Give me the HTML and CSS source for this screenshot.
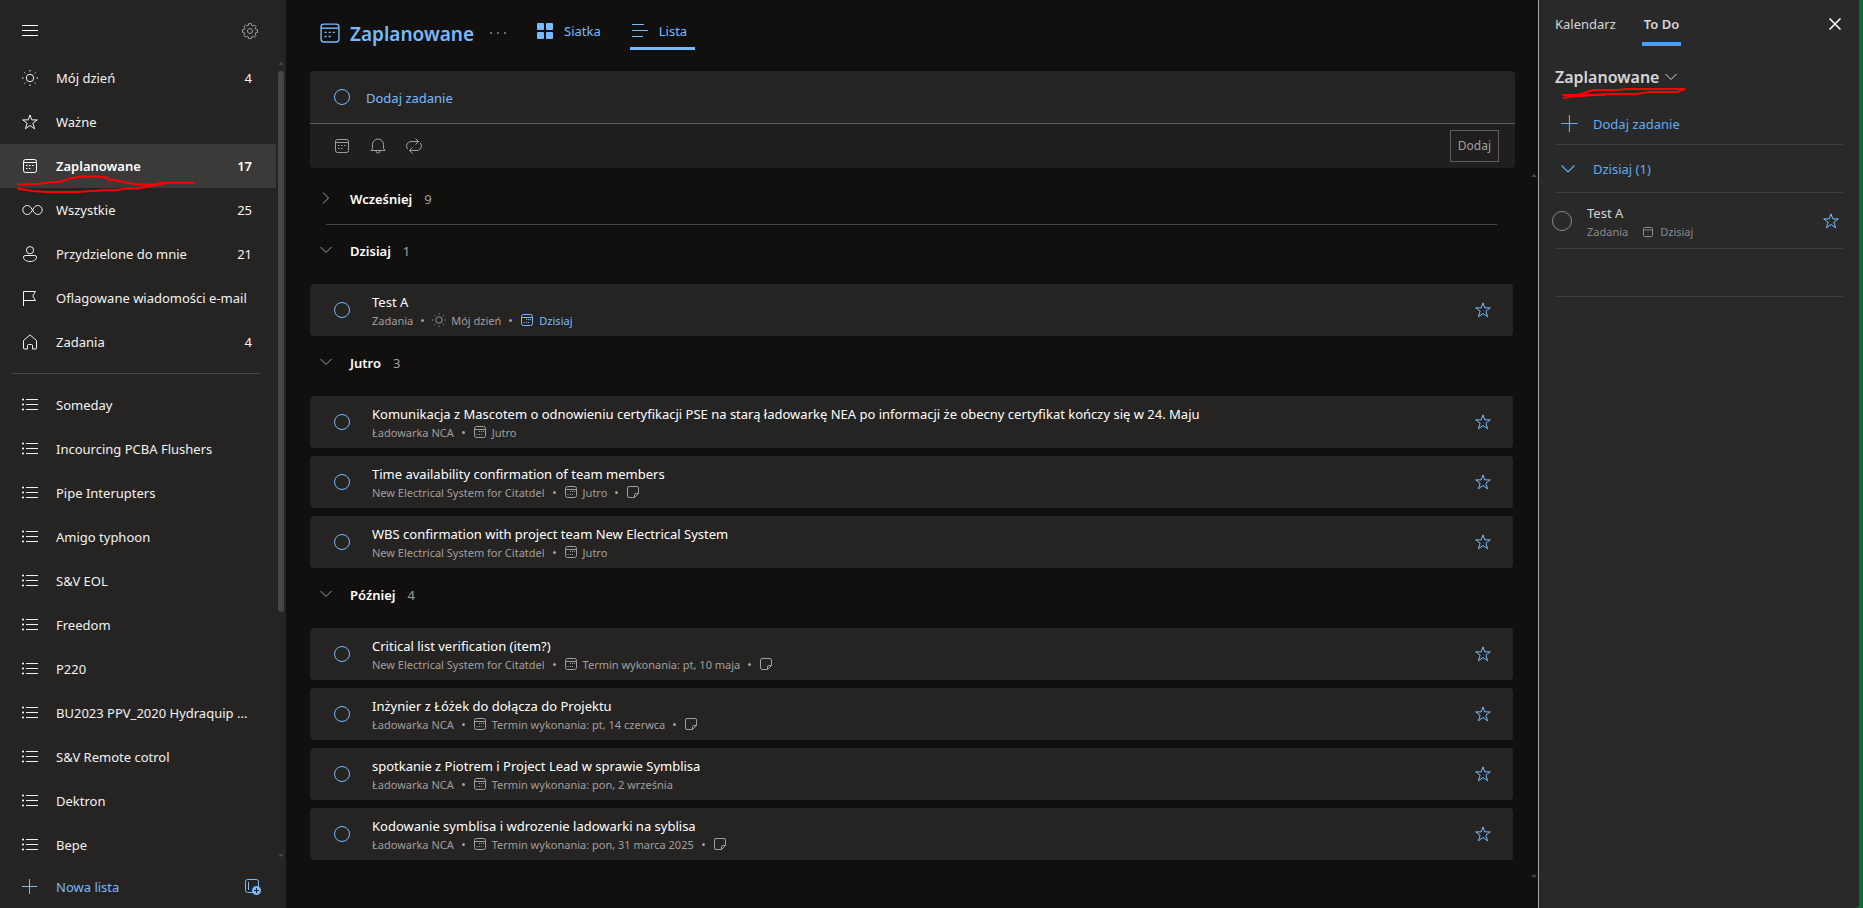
FILE: index.html
```html
<!DOCTYPE html>
<html lang="pl">
<head>
    <meta charset="UTF-8">
    <meta name="viewport" content="width=device-width, initial-scale=1.0">
    <title>Zaplanowane - To Do</title>
    <link rel="stylesheet" href="styles.css">
</head>
<body>

<svg class="sprite" aria-hidden="true">
    <symbol id="i-sun" viewBox="0 0 16 16"><circle cx="8" cy="8" r="3.7"/><path d="M8 0v1.5M8 14.5V16M0 8h1.5M14.5 8H16M2.4 2.4l1 1M12.6 12.6l1 1M13.6 2.4l-1 1M3.4 12.6l-1 1"/></symbol>
    <symbol id="i-star" viewBox="0 0 16 16"><path d="M8 .9l1.8 5h5.5l-4.4 3.3 1.7 5.6L8 11.500l-4.600 3.300 1.700-5.600L.7 5.900h5.500z"/></symbol>
    <symbol id="i-cal" viewBox="0 0 16 16"><rect x="1.5" y="1.500" width="13" height="13" rx="2"/><path d="M1.500 4.500h13"/><path d="M7 7.500h1.500M10 7.500h1.500M4 10.500h1.500M7 10.500h1.500M4 7.500h1.500"/></symbol>
    <symbol id="i-calmini" viewBox="0 0 12 12"><rect x="1.500" y="1.500" width="9" height="9" rx="1"/><path d="M1.500 4h9"/></symbol>
    <symbol id="i-calmeta" viewBox="0 0 12 12"><rect x=".5" y=".5" width="11" height="11" rx="2"/><path d="M.5 3.500h11M5 5.500h1M7 5.500h1M9 5.500h1M2.500 8.500h1M5 8.500h1M7 8.500h1"/></symbol>
    <symbol id="i-inf" viewBox="0 0 21 16"><path d="M10.500 8C8.500 4.800 7.500 3.500 5.300 3.500a4.500 4.500 0 0 0 0 9C7.500 12.500 8.500 11.200 10.500 8s3-4.500 5.200-4.500a4.500 4.500 0 0 1 0 9C13.500 12.500 12.500 11.200 10.500 8z"/></symbol>
    <symbol id="i-user" viewBox="0 0 16 16"><circle cx="8" cy="4.200" r="3.600"/><path d="M3.200 9.500h9.600a1.700 1.700 0 0 1 1.700 1.700c0 2.600-3 4.300-6.500 4.300s-6.500-1.700-6.500-4.300a1.700 1.700 0 0 1 1.700-1.700z"/></symbol>
    <symbol id="i-flag" viewBox="0 0 16 16"><path d="M1.500 16V1.500h12L10.800 6l2.700 4.500h-12"/></symbol>
    <symbol id="i-home" viewBox="0 0 16 16"><path d="M1.500 6.500L8 .9l6.500 5.600v7.500a1 1 0 0 1-1 1H10.500v-3.500a1 1 0 0 0-1-1h-3a1 1 0 0 0-1 1V15H2.500a1 1 0 0 1-1-1z"/></symbol>
    <symbol id="i-list" viewBox="0 0 16 16"><path d="M4 2.500h12M4 7.500h12M4 12.500h12M0 2.500h2M0 7.500h2M0 12.500h2"/><path opacity=".35" d="M0 1.500h2M0 3.500h2M0 6.500h2M0 8.500h2M0 11.500h2M0 13.500h2"/></symbol>
    <symbol id="i-gear" viewBox="0 0 16 16"><circle cx="8" cy="8" r="2.500"/><path d="M6.700.6h2.600l.4 1.900 1.100.5 1.700-1 1.600 1.700-1 1.600.5 1.100 1.900.4v2.600l-1.900.4-.5 1.100 1 1.600-1.700 1.700-1.600-1-1.100.5-.4 1.900H6.700l-.4-1.900-1.100-.5-1.700 1-1.600-1.700 1-1.600-.5-1.100-1.900-.4V6.800l1.900-.4.5-1.100-1-1.600L3.600 2l1.600 1 1.100-.5z"/></symbol>
    <symbol id="i-plus" viewBox="0 0 16 16"><path d="M7.500 0v15M0 7.500h15"/></symbol>
    <symbol id="i-newgroup" viewBox="0 0 16 16"><rect x=".5" y=".5" width="13" height="13" rx="2"/><path d="M3.500 3v8"/><circle class="solid" cx="11.500" cy="11.500" r="4.500"/><path class="cut" d="M11.500 9v5M9 11.500h5"/></symbol>
    <symbol id="i-bell" viewBox="0 0 16 16"><path d="M1 12.500h14l-1.500-2V6.500a5.500 5.500 0 0 0-11 0v4zM6 13a2 2 0 0 0 4 0"/></symbol>
    <symbol id="i-repeat" viewBox="0 0 16 16"><path d="M9.500.5l3 3-3 3M12.500 3.500H5a4.500 4.500 0 0 0-3.300 7.500M6.500 15.500l-3-3 3-3M3.500 12.500H11a4.500 4.500 0 0 0 3.300-7.500"/></symbol>
    <symbol id="i-note" viewBox="0 0 12 12"><path d="M2 .5h8A1.500 1.500 0 0 1 11.500 2v5.500l-4 4H2A1.500 1.500 0 0 1 .5 10V2A1.500 1.500 0 0 1 2 .5zM11.500 7.500H9A1.500 1.500 0 0 0 7.500 9v2.500"/></symbol>
    <symbol id="i-down" viewBox="0 0 12 12"><path d="M.5 3L6 8.500 11.500 3"/></symbol>
    <symbol id="i-right" viewBox="0 0 12 12"><path d="M3 .5L8.500 6 3 11.500"/></symbol>
    <symbol id="i-close" viewBox="0 0 12 12"><path stroke-width="1.500" d="M.5.5l11 11M11.500.5l-11 11"/></symbol>
</svg>

<div class="app">
    <aside class="sidebar">
        <div class="sidebar-top">
            <button class="icon-btn" aria-label="Menu"><svg class="icon" viewBox="0 0 16 16"><path d="M0 2.500h16M0 7.500h16M0 12.500h16"/></svg></button>
            <button class="icon-btn muted" aria-label="Ustawienia"><svg class="icon"><use href="#i-gear"/></svg></button>
        </div>
        <div class="sidebar-body">
            <nav class="nav">
                <a class="nav-item" href="#"><svg class="icon"><use href="#i-sun"/></svg><span class="nav-label">Mój dzień</span><span>4</span></a>
                <a class="nav-item" href="#"><svg class="icon"><use href="#i-star"/></svg><span class="nav-label">Ważne</span></a>
                <a class="nav-item active" href="#"><svg class="icon"><use href="#i-cal"/></svg><span class="nav-label">Zaplanowane</span><span>17</span>
                    <svg class="scribble scribble-nav" viewBox="0 0 180 18"><path d="M1 9.500L24 8.700 32 7.500 45 6.500 56 3 67 1.500H81L91 2.500 92 4.500 101 5.500 112 8 122 9.500H137L149 7.700H179M1 13.500L16 16 31 17H61L84 15.500 101 15 109 13.700 122 13.500 131 11.500 149 8.500"/></svg>
                </a>
                <a class="nav-item" href="#"><svg class="icon icon-inf"><use href="#i-inf"/></svg><span class="nav-label">Wszystkie</span><span>25</span></a>
                <a class="nav-item" href="#"><svg class="icon"><use href="#i-user"/></svg><span class="nav-label">Przydzielone do mnie</span><span>21</span></a>
                <a class="nav-item" href="#"><svg class="icon"><use href="#i-flag"/></svg><span class="nav-label">Oflagowane wiadomości e-mail</span></a>
                <a class="nav-item" href="#"><svg class="icon"><use href="#i-home"/></svg><span class="nav-label">Zadania</span><span>4</span></a>
                <hr class="nav-line">
                <a class="nav-item" href="#"><svg class="icon"><use href="#i-list"/></svg><span class="nav-label">Someday</span></a>
                <a class="nav-item" href="#"><svg class="icon"><use href="#i-list"/></svg><span class="nav-label">Incourcing PCBA Flushers</span></a>
                <a class="nav-item" href="#"><svg class="icon"><use href="#i-list"/></svg><span class="nav-label">Pipe Interupters</span></a>
                <a class="nav-item" href="#"><svg class="icon"><use href="#i-list"/></svg><span class="nav-label">Amigo typhoon</span></a>
                <a class="nav-item" href="#"><svg class="icon"><use href="#i-list"/></svg><span class="nav-label">S&amp;V EOL</span></a>
                <a class="nav-item" href="#"><svg class="icon"><use href="#i-list"/></svg><span class="nav-label">Freedom</span></a>
                <a class="nav-item" href="#"><svg class="icon"><use href="#i-list"/></svg><span class="nav-label">P220</span></a>
                <a class="nav-item" href="#"><svg class="icon"><use href="#i-list"/></svg><span class="nav-label">BU2023 PPV_2020 Hydraquip ...</span></a>
                <a class="nav-item" href="#"><svg class="icon"><use href="#i-list"/></svg><span class="nav-label">S&amp;V Remote cotrol</span></a>
                <a class="nav-item" href="#"><svg class="icon"><use href="#i-list"/></svg><span class="nav-label">Dektron</span></a>
                <a class="nav-item" href="#"><svg class="icon"><use href="#i-list"/></svg><span class="nav-label">Bepe</span></a>
            </nav>
            <div class="scrollbar">
                <span class="arrow-up"></span>
                <span class="thumb"></span>
                <span class="arrow-down"></span>
            </div>
        </div>
        <div class="sidebar-bottom">
            <button class="new-list"><svg class="icon"><use href="#i-plus"/></svg>Nowa lista</button>
            <button class="icon-btn" aria-label="Nowa grupa"><svg class="icon"><use href="#i-newgroup"/></svg></button>
        </div>
    </aside>

    <main class="main">
        <header class="header">
            <svg class="icon icon-title"><use href="#i-cal"/></svg>
            <h1>Zaplanowane</h1>
            <button class="more" aria-label="Więcej"><svg class="icon" viewBox="0 0 16 16"><path d="M0 8h2M7 8h2M14 8h2"/></svg></button>
            <button class="view"><svg class="icon icon-grid" viewBox="0 0 16 16"><rect width="7" height="7" rx="1"/><rect x="9" width="7" height="7" rx="1"/><rect y="9" width="7" height="7" rx="1"/><rect x="9" y="9" width="7" height="7" rx="1"/></svg>Siatka</button>
            <button class="view active"><svg class="icon" viewBox="0 0 16 16"><path d="M0 1.500h12M0 7.500h16M0 13.500h11"/></svg>Lista</button>
        </header>

        <div class="add-card">
            <div class="add-row">
                <span class="circle"></span>
                <input class="add-input" type="text" placeholder="Dodaj zadanie" aria-label="Dodaj zadanie">
            </div>
            <div class="add-tools">
                <button class="icon-btn" aria-label="Termin"><svg class="icon"><use href="#i-cal"/></svg></button>
                <button class="icon-btn" aria-label="Przypomnienie"><svg class="icon"><use href="#i-bell"/></svg></button>
                <button class="icon-btn" aria-label="Powtarzanie"><svg class="icon"><use href="#i-repeat"/></svg></button>
                <button class="add-btn">Dodaj</button>
            </div>
        </div>

        <div class="tasks">
            <div class="task-list">
                <button class="group"><svg class="icon-sm"><use href="#i-right"/></svg><b>Wcześniej</b><span>9</span></button>
                <hr class="group-line">

                <button class="group open"><svg class="icon-sm"><use href="#i-down"/></svg><b>Dzisiaj</b><span>1</span></button>
                <div class="task">
                    <input class="circle" type="checkbox" aria-label="Test A">
                    <div class="task-text">
                        <div class="task-title">Test A</div>
                        <div class="meta"><span>Zadania</span><i></i><svg class="icon-sun"><use href="#i-sun"/></svg><span>Mój dzień</span><i></i><svg class="icon-meta blue"><use href="#i-calmeta"/></svg><span class="blue">Dzisiaj</span></div>
                    </div>
                    <button class="icon-btn star" aria-label="Ważne"><svg class="icon"><use href="#i-star"/></svg></button>
                </div>

                <button class="group open"><svg class="icon-sm"><use href="#i-down"/></svg><b>Jutro</b><span>3</span></button>
                <div class="task">
                    <input class="circle" type="checkbox" aria-label="Komunikacja z Mascotem">
                    <div class="task-text">
                        <div class="task-title">Komunikacja z Mascotem o odnowieniu certyfikacji PSE na starą ładowarkę NEA po informacji że obecny certyfikat kończy się w 24. Maju</div>
                        <div class="meta"><span>Ładowarka NCA</span><i></i><svg class="icon-meta"><use href="#i-calmeta"/></svg><span>Jutro</span></div>
                    </div>
                    <button class="icon-btn star" aria-label="Ważne"><svg class="icon"><use href="#i-star"/></svg></button>
                </div>
                <div class="task">
                    <input class="circle" type="checkbox" aria-label="Time availability confirmation">
                    <div class="task-text">
                        <div class="task-title">Time availability confirmation of team members</div>
                        <div class="meta"><span>New Electrical System for Citatdel</span><i></i><svg class="icon-meta"><use href="#i-calmeta"/></svg><span>Jutro</span><i></i><svg class="icon-meta"><use href="#i-note"/></svg></div>
                    </div>
                    <button class="icon-btn star" aria-label="Ważne"><svg class="icon"><use href="#i-star"/></svg></button>
                </div>
                <div class="task">
                    <input class="circle" type="checkbox" aria-label="WBS confirmation">
                    <div class="task-text">
                        <div class="task-title">WBS confirmation with project team New Electrical System</div>
                        <div class="meta"><span>New Electrical System for Citatdel</span><i></i><svg class="icon-meta"><use href="#i-calmeta"/></svg><span>Jutro</span></div>
                    </div>
                    <button class="icon-btn star" aria-label="Ważne"><svg class="icon"><use href="#i-star"/></svg></button>
                </div>

                <button class="group open"><svg class="icon-sm"><use href="#i-down"/></svg><b>Później</b><span>4</span></button>
                <div class="task">
                    <input class="circle" type="checkbox" aria-label="Critical list verification">
                    <div class="task-text">
                        <div class="task-title">Critical list verification (item?)</div>
                        <div class="meta"><span>New Electrical System for Citatdel</span><i></i><svg class="icon-meta"><use href="#i-calmeta"/></svg><span>Termin wykonania: pt, 10 maja</span><i></i><svg class="icon-meta"><use href="#i-note"/></svg></div>
                    </div>
                    <button class="icon-btn star" aria-label="Ważne"><svg class="icon"><use href="#i-star"/></svg></button>
                </div>
                <div class="task">
                    <input class="circle" type="checkbox" aria-label="Inżynier z Łóżek">
                    <div class="task-text">
                        <div class="task-title">Inżynier z Łóżek do dołącza do Projektu</div>
                        <div class="meta"><span>Ładowarka NCA</span><i></i><svg class="icon-meta"><use href="#i-calmeta"/></svg><span>Termin wykonania: pt, 14 czerwca</span><i></i><svg class="icon-meta"><use href="#i-note"/></svg></div>
                    </div>
                    <button class="icon-btn star" aria-label="Ważne"><svg class="icon"><use href="#i-star"/></svg></button>
                </div>
                <div class="task">
                    <input class="circle" type="checkbox" aria-label="spotkanie z Piotrem">
                    <div class="task-text">
                        <div class="task-title">spotkanie z Piotrem i Project Lead w sprawie Symblisa</div>
                        <div class="meta"><span>Ładowarka NCA</span><i></i><svg class="icon-meta"><use href="#i-calmeta"/></svg><span>Termin wykonania: pon, 2 września</span></div>
                    </div>
                    <button class="icon-btn star" aria-label="Ważne"><svg class="icon"><use href="#i-star"/></svg></button>
                </div>
                <div class="task">
                    <input class="circle" type="checkbox" aria-label="Kodowanie symblisa">
                    <div class="task-text">
                        <div class="task-title">Kodowanie symblisa i wdrozenie ladowarki na syblisa</div>
                        <div class="meta"><span>Ładowarka NCA</span><i></i><svg class="icon-meta"><use href="#i-calmeta"/></svg><span>Termin wykonania: pon, 31 marca 2025</span><i></i><svg class="icon-meta"><use href="#i-note"/></svg></div>
                    </div>
                    <button class="icon-btn star" aria-label="Ważne"><svg class="icon"><use href="#i-star"/></svg></button>
                </div>
            </div>
            <div class="scrollbar">
                <span class="arrow-up"></span>
                <span class="arrow-down"></span>
            </div>
        </div>
    </main>

    <div class="edge">
        <aside class="panel">
            <div class="panel-tabs">
                <button class="tab">Kalendarz</button>
                <button class="tab active">To Do</button>
                <button class="icon-btn close" aria-label="Zamknij"><svg class="icon-sm"><use href="#i-close"/></svg></button>
            </div>
            <button class="panel-title">Zaplanowane<svg class="icon-sm"><use href="#i-down"/></svg>
                <svg class="scribble scribble-panel" viewBox="0 0 126 12"><path d="M1 7h16l12-4 4-1h24l8-1h59l-8 3H88l-12 2H45l-18 1.500-16 1L2 10M17 7h28"/></svg>
            </button>
            <button class="panel-row panel-add"><svg class="icon-plus"><use href="#i-plus"/></svg>Dodaj zadanie</button>
            <button class="panel-row"><svg class="icon-chev"><use href="#i-down"/></svg>Dzisiaj (1)</button>
            <div class="panel-task">
                <input class="circle circle-lg" type="checkbox" aria-label="Test A">
                <div class="panel-text">
                    <div class="panel-name">Test A</div>
                    <div class="panel-meta"><span>Zadania</span><svg class="icon-sm"><use href="#i-calmini"/></svg><span>Dzisiaj</span></div>
                </div>
                <button class="icon-btn star" aria-label="Ważne"><svg class="icon"><use href="#i-star"/></svg></button>
            </div>
            <div class="panel-row"></div>
        </aside>
    </div>
</div>

</body>
</html>
```
FILE: styles.css
```css
* {
    box-sizing: border-box;
}
body {
    margin: 0;
    background-color: #11100f;
    color: #fff;
    font-family: 'Segoe UI', 'Noto Sans', sans-serif;
    font-size: 13px;
    line-height: 20px;
}
button {
    padding: 0;
    border: none;
    background: none;
    color: inherit;
    font: inherit;
    cursor: pointer;
}
hr {
    height: 1px;
    border: none;
}
svg {
    flex: none;
    fill: none;
    stroke: currentColor;
}
.sprite {
    position: absolute;
    width: 0;
    height: 0;
}
.icon {
    width: 16px;
    height: 16px;
}
.icon-sm {
    width: 12px;
    height: 12px;
}
.icon-btn {
    display: flex;
}
.solid, .icon-grid {
    fill: currentColor;
    stroke: none;
}
.cut {
    stroke: #252423;
}
.blue {
    color: #78baff;
}
.muted {
    color: #a19f9d;
}
.app {
    display: flex;
    height: 100vh;
    overflow: hidden;
}

/* sidebar */
.sidebar {
    display: flex;
    flex-direction: column;
    flex: none;
    width: 286px;
    background-color: #252423;
}
.sidebar-top {
    display: flex;
    flex: none;
    justify-content: space-between;
    align-items: center;
    height: 56px;
    padding: 6px 28px 0 22px;
}
.sidebar-body {
    display: flex;
    flex: 1;
    min-height: 0;
}
.nav {
    flex: 1;
    overflow: hidden;
}
.nav-item {
    position: relative;
    display: flex;
    align-items: center;
    height: 44px;
    padding: 0 24px 0 22px;
    color: #f3f2f1;
    text-decoration: none;
    white-space: nowrap;
}
.nav-item.active {
    background-color: #3b3a39;
    color: #fff;
    font-weight: 600;
}
.nav-label {
    flex: 1;
    margin-left: 18px;
}
.icon-inf {
    width: 21px;
    margin-right: -5px;
}
.nav-line {
    margin: 9px 16px 9px 12px;
    background-color: #484644;
}
.scrollbar {
    display: flex;
    flex-direction: column;
    flex: none;
    width: 10px;
    padding: 6px 2px 7px;
    color: #484644;
}
.arrow-up, .arrow-down {
    border: 3px solid transparent;
}
.arrow-up {
    border-top: none;
    border-bottom-color: currentColor;
}
.arrow-down {
    margin-top: auto;
    border-bottom: none;
    border-top-color: currentColor;
}
.thumb {
    height: 68%;
    margin-top: 6px;
    border-radius: 3px;
    background-color: #484644;
}
.sidebar-bottom {
    display: flex;
    flex: none;
    justify-content: space-between;
    align-items: center;
    height: 44px;
    padding: 2px 25px 0 22px;
    color: #78baff;
}
.new-list {
    display: flex;
    align-items: center;
    gap: 18px;
}

/* hand-drawn red marks */
.scribble {
    position: absolute;
    overflow: visible;
    stroke: #f00;
    stroke-width: 2;
}
.scribble-nav {
    top: 31px;
    left: 16px;
    width: 180px;
    height: 18px;
    z-index: 1;
}
.scribble-panel {
    top: 21px;
    left: 6px;
    width: 126px;
    height: 12px;
}

/* main column */
.main {
    display: flex;
    flex-direction: column;
    flex: 1;
    min-width: 0;
    padding-left: 24px;
}
.header {
    display: flex;
    flex: none;
    align-items: center;
    height: 71px;
    padding: 0 0 9px 9px;
    color: #78baff;
}
.icon-title {
    width: 22px;
    height: 22px;
    margin-top: 4px;
}
h1 {
    margin: 6px 0 0 9px;
    font-size: 19px;
    font-weight: 600;
    line-height: 28px;
}
.more {
    display: flex;
    margin: 4px 24px 0 16px;
    color: #c8c6c4;
}
.view {
    display: flex;
    align-items: center;
    gap: 11px;
    height: 38px;
    margin: 0 22px 0 5px;
    padding: 3px 2px 0;
    border-bottom: 3px solid transparent;
}
.view.active {
    padding: 3px 8px 0 2px;
    border-color: #78baff;
}
.add-card {
    flex: none;
    margin-right: 23px;
    border-radius: 4px;
    background-color: #201f1e;
}
.add-row {
    display: flex;
    align-items: center;
    height: 53px;
    padding: 0 24px;
    border-bottom: 1px solid #605e5c;
    border-radius: 4px 4px 0 0;
    background-color: #252423;
}
.circle {
    flex: none;
    width: 16px;
    height: 16px;
    margin: 0;
    border: 1px solid #78baff;
    border-radius: 50%;
    appearance: none;
}
.add-input {
    flex: 1;
    padding: 2px 16px 0;
    border: none;
    outline: none;
    background: none;
    color: #fff;
    font: inherit;
}
.add-input::placeholder {
    color: #78baff;
    opacity: 1;
}
.add-tools {
    display: flex;
    align-items: center;
    gap: 20px;
    height: 44px;
    padding: 0 16px 0 24px;
    color: #a19f9d;
}
.add-btn {
    height: 32px;
    margin-left: auto;
    padding: 0 7px;
    border: 1px solid #605e5c;
    font-size: 12px;
}
.tasks {
    display: flex;
    flex: 1;
    min-height: 0;
    margin-bottom: 24px;
}
.tasks .scrollbar {
    width: 7px;
    padding: 6px 1px 6px 0;
}
.task-list {
    flex: 1;
    min-width: 0;
    margin-right: 18px;
    padding-top: 4px;
    overflow: hidden;
}
.group {
    display: flex;
    align-items: center;
    width: 100%;
    height: 52px;
    padding-left: 10px;
    color: #a19f9d;
}
.group.open {
    margin-bottom: 8px;
}
.task + .group {
    margin-top: -8px;
}
.group b, .group span {
    padding-top: 2px;
}
.group b {
    margin: 0 12px 0 18px;
    color: #fff;
    font-weight: 600;
}
.group-line {
    margin: 0 16px -1px;
    background-color: #484644;
}
.task {
    display: flex;
    align-items: center;
    height: 52px;
    margin-bottom: 8px;
    padding: 0 22px 0 24px;
    border-radius: 4px;
    background-color: #252423;
}
.task-text {
    flex: 1;
    min-width: 0;
    margin-left: 22px;
}
.task-title {
    overflow: hidden;
    text-overflow: ellipsis;
    white-space: nowrap;
}
.meta {
    display: flex;
    align-items: center;
    height: 17px;
    color: #a19f9d;
    font-size: 11px;
    line-height: 17px;
}
.meta i {
    width: 3px;
    height: 3px;
    margin: 0 8px;
    border-radius: 50%;
    background-color: #a19f9d;
}
.icon-sun {
    width: 14px;
    height: 14px;
    margin-right: 5px;
}
.icon-meta {
    width: 12px;
    height: 12px;
    margin: 0 6px 0 1px;
}
.meta .blue {
    color: #78baff;
}
.star {
    color: #78baff;
}

/* To Do pane */
.edge {
    flex: none;
    width: 325px;
    padding-right: 4px;
    background-color: #0f6b32;
}
.panel {
    height: 100%;
    padding: 0 16px;
    border-left: 1px solid #a6a6a6;
    border-bottom-right-radius: 4px;
    background-color: #292929;
    color: #d6d6d6;
}
.panel-tabs {
    display: flex;
    gap: 26px;
    height: 46px;
}
.tab {
    height: 46px;
    padding-top: 6px;
    border-bottom: 4px solid transparent;
}
.tab.active {
    padding: 6px 2px 0;
    border-color: #479ef5;
    font-weight: 600;
}
.close {
    align-self: center;
    margin: 2px 2px 0 auto;
    color: #fff;
}
.panel-title {
    position: relative;
    display: flex;
    align-items: center;
    gap: 6px;
    margin-top: 21px;
    font-size: 16px;
    font-weight: 600;
}
.panel-row {
    display: flex;
    align-items: center;
    width: 100%;
    height: 48px;
    border-bottom: 1px solid #3d3d3d;
    color: #62abf5;
}
.panel-add {
    height: 58px;
    padding-top: 16px;
}
.icon-plus {
    width: 18px;
    height: 18px;
    margin: 0 14px 0 6px;
}
.icon-chev {
    width: 14px;
    height: 14px;
    margin: 0 18px 0 6px;
}
.panel-task {
    display: flex;
    align-items: center;
    height: 56px;
    padding-right: 4px;
    border-bottom: 1px solid #3d3d3d;
}
.circle-lg {
    width: 20px;
    height: 20px;
    margin-left: -3px;
    border-color: #8a8a8a;
}
.panel-text {
    flex: 1;
    margin-left: 15px;
    padding-top: 2px;
}
.panel-meta {
    display: flex;
    align-items: center;
    color: #8a8a8a;
    font-size: 11px;
    line-height: 17px;
}
.panel-meta svg {
    margin: 0 6px 0 14px;
}
```
